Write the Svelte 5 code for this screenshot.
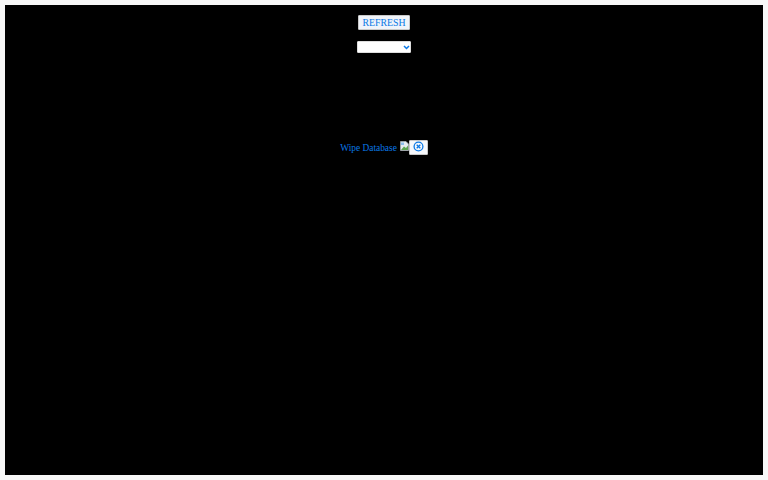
<script>
  let mode = "";
</script>

<style>
  :global(body) {
    margin: 0;
    background: #f8f8f8;
  }
  .page {
    margin: 5px;
    width: 758px;
    height: 470px;
    background: #000;
    color: #0a78e6;
    font-family: "Liberation Serif", "Times New Roman", serif;
    font-size: 9.4px;
    display: flex;
    flex-direction: column;
    align-items: center;
    padding-top: 10px;
    box-sizing: border-box;
  }
  button {
    font-family: inherit;
    color: inherit;
    background: #f0f4fa;
    border: 1px solid #c8c8c8;
    border-radius: 1px;
    padding: 0;
    margin: 0;
    display: block;
  }
  .refresh {
    width: 52px;
    height: 15px;
    font-size: 9.8px;
  }
  select {
    display: block;
    width: 54px;
    height: 12px;
    margin-top: 11px;
    background: #fff url("data:image/svg+xml,%3Csvg xmlns='http://www.w3.org/2000/svg' width='7' height='5'%3E%3Cpath d='M1 1L3.5 3.5L6 1' fill='none' stroke='%230a78e6' stroke-width='1.5'/%3E%3C/svg%3E") no-repeat 45px 3px;
    color: #0a78e6;
    border: 1px solid #ddd;
    border-radius: 1px;
    padding: 0;
    font-size: 8px;
    appearance: none;
  }
  .wipe {
    margin-top: 87px;
    display: flex;
    align-items: center;
    height: 15px;
    white-space: nowrap;
  }
  .label {
    margin-right: 3px;
  }
  .broken {
    display: block;
    width: 9px;
    height: 10px;
    margin-top: -4px;
  }
  .close {
    width: 19px;
    height: 15px;
    display: flex;
    align-items: center;
    justify-content: center;
    background: #f6f8fb;
  }
  .close svg {
    display: block;
    width: 11px;
    height: 11px;
    margin-top: -2px;
  }
</style>

<div class="page">
  <button class="refresh">REFRESH</button>
  <select bind:value={mode}>
    <option value=""></option>
  </select>
  <div class="wipe">
    <span class="label">Wipe Database</span>
    <svg class="broken" viewBox="0 0 9 10">
      <path d="M0.5 0.5H6L8.5 3V9.5H0.5Z" fill="#e6ebf0" stroke="#a8aeb5" stroke-width="0.8" />
      <path d="M1 9L4 5.5L6 7L8 4.5V9Z" fill="#5da651" />
      <path d="M1 1.5H4V4H1Z" fill="#8bbcec" />
    </svg>
    <button class="close" aria-label="Close">
      <svg viewBox="0 0 11 11" fill="none" stroke="currentColor" stroke-width="1.3">
        <circle cx="5.5" cy="5.5" r="4.4" />
        <path d="M3.7 3.7L7.3 7.3M7.3 3.7L3.7 7.3" />
      </svg>
    </button>
  </div>
</div>
